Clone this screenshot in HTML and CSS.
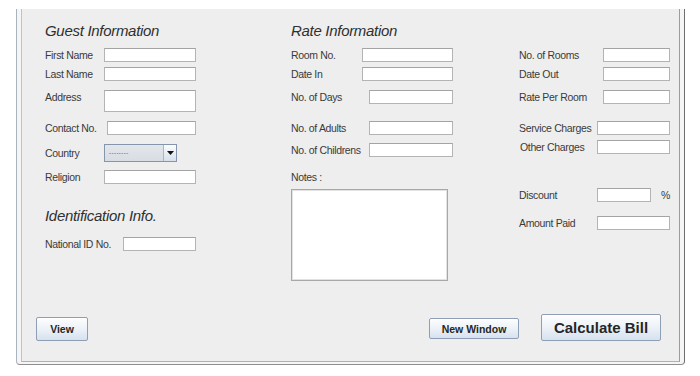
FILE: index.html
```html
<!DOCTYPE html>
<html>
<head>
<meta charset="utf-8">
<title>Guest Form</title>
<link rel="stylesheet" href="styles.css">
</head>
<body>
<div class="frame">
  <div class="panel">
    <div class="cols">
      <section class="col">
        <h2 class="title">Guest Information</h2>
        <div class="row mt7"><label class="lbl w59">First Name</label><input class="fld w91"></div>
        <div class="row mt5"><label class="lbl w59">Last Name</label><input class="fld w91"></div>
        <div class="row row-top mt9"><label class="lbl w59">Address</label><input class="fld w91 tall"></div>
        <div class="row mt9"><label class="lbl w62">Contact No.</label><input class="fld w88"></div>
        <div class="row mt9"><label class="lbl w59">Country</label>
          <div class="combo"><span class="combo-text">- - - - - - - -</span><span class="combo-btn"><svg width="7" height="4" viewBox="0 0 7 4"><path d="M0 0H7L3.5 4Z" fill="#111"/></svg></span></div>
        </div>
        <div class="row mt8"><label class="lbl w59">Religion</label><input class="fld w91"></div>
        <h2 class="title mt22">Identification Info.</h2>
        <div class="row mt11"><label class="lbl w78">National ID No.</label><input class="fld w72"></div>
      </section>

      <section class="col">
        <h2 class="title">Rate Information</h2>
        <div class="row mt7"><label class="lbl w71">Room No.</label><input class="fld w90"></div>
        <div class="row mt5"><label class="lbl w71">Date In</label><input class="fld w90"></div>
        <div class="row mt9"><label class="lbl w78">No. of Days</label><input class="fld w83"></div>
        <div class="row mt17"><label class="lbl w78">No. of Adults</label><input class="fld w83"></div>
        <div class="row mt8"><label class="lbl w78">No. of Childrens</label><input class="fld w83"></div>
        <div class="row mt13"><label class="lbl">Notes :</label></div>
        <textarea class="notes"></textarea>
      </section>

      <section class="col">
        <div class="row mt27"><label class="lbl w84">No. of Rooms</label><input class="fld w66"></div>
        <div class="row mt5"><label class="lbl w84">Date Out</label><input class="fld w66"></div>
        <div class="row mt9"><label class="lbl w84">Rate Per Room</label><input class="fld w66"></div>
        <div class="row mt17"><label class="lbl w78">Service Charges</label><input class="fld w72"></div>
        <div class="row mt5"><label class="lbl w78 ind1">Other Charges</label><input class="fld w72"></div>
        <div class="row mt34"><label class="lbl w78">Discount</label><input class="fld w53"><span class="pct">%</span></div>
        <div class="row mt14"><label class="lbl w78">Amount Paid</label><input class="fld w72"></div>
      </section>
    </div>

    <div class="actions">
      <button class="btn btn-view">View</button>
      <div class="actions-right">
        <button class="btn btn-new">New Window</button>
        <button class="btn btn-calc">Calculate Bill</button>
      </div>
    </div>
  </div>
</div>
</body>
</html>
```

FILE: styles.css
```css
* { box-sizing: border-box; }

html, body {
  margin: 0;
  padding: 0;
  background: #ffffff;
  font-family: "Liberation Sans", Arial, sans-serif;
}

.frame {
  margin: 9px 0 0 16px;
  width: 669px;
  height: 356px;
  background: #f5f5f5;
  border: 1px solid #8f8f8f;
  border-top: none;
  border-left-color: #a9b3bd;
  border-right-color: #6e6e6e;
  border-radius: 0 0 4px 4px;
  display: flex;
}

.panel {
  margin: 0 4px 2px 4px;
  flex: 1;
  background: #eeeeee;
  border: 1px solid #c2c2c2;
  border-top: none;
  border-right-color: #9c9c9c;
  border-bottom-color: #b0b0b0;
  display: flex;
  flex-direction: column;
}

.cols {
  display: grid;
  grid-template-columns: 246px 228px 1fr;
  padding: 12px 0 0 23px;
}

.col {
  display: flex;
  flex-direction: column;
  align-items: flex-start;
}

.title {
  margin: 0;
  height: 20px;
  line-height: 20px;
  font-size: 15px;
  font-weight: normal;
  font-style: italic;
  letter-spacing: -0.3px;
  color: #303030;
}

.row {
  display: flex;
  align-items: center;
}
.row-top { align-items: flex-start; }

.lbl {
  display: block;
  flex: none;
  height: 14px;
  line-height: 14px;
  font-size: 10.5px;
  letter-spacing: -0.35px;
  color: #3a3a3a;
  white-space: nowrap;
}
.ind1 { padding-left: 1px; }

.w59 { width: 59px; }
.w62 { width: 62px; }
.w71 { width: 71px; }
.w78 { width: 78px; }
.w84 { width: 84px; }

.fld {
  display: block;
  margin: 0;
  padding: 0;
  height: 14px;
  background: #ffffff;
  border: 1px solid #b4b4b4;
  border-top-color: #a4a4a4;
  border-radius: 0;
  font: inherit;
}
.fld.tall { height: 22px; }
.fld.w53 { width: 54px; }
.fld.w66 { width: 67px; }
.fld.w72 { width: 73px; }
.fld.w83 { width: 84px; }
.fld.w88 { width: 89px; }
.fld.w90 { width: 91px; }
.fld.w91 { width: 92px; }

.pct {
  margin-left: 10px;
  font-size: 10.5px;
  color: #3a3a3a;
}

.combo {
  display: flex;
  width: 73px;
  height: 18px;
  border: 1px solid #8595ab;
  background: linear-gradient(#e3e6eb, #d8dde4);
}
.combo-text {
  flex: 1;
  padding-left: 4px;
  font-size: 6px;
  line-height: 16px;
  color: #333;
  letter-spacing: -0.6px;
  white-space: nowrap;
  overflow: hidden;
}
.combo-btn {
  width: 13px;
  display: flex;
  align-items: center;
  justify-content: center;
  border-left: 1px solid #a9b6c6;
  background: linear-gradient(#fbfcfd, #d6e0ec);
}

.notes {
  display: block;
  margin: 5px 0 0 0;
  padding: 0;
  width: 157px;
  height: 92px;
  resize: none;
  background: #ffffff;
  border: 1px solid #a8a8a8;
  box-shadow: inset 0 0 0 1px #e2e2e2;
}

.mt5 { margin-top: 5px; }
.mt7 { margin-top: 7px; }
.mt8 { margin-top: 8px; }
.mt9 { margin-top: 9px; }
.mt11 { margin-top: 11px; }
.mt13 { margin-top: 13px; }
.mt14 { margin-top: 14px; }
.mt17 { margin-top: 17px; }
.mt22 { margin-top: 22px; }
.mt27 { margin-top: 27px; }
.mt34 { margin-top: 34px; }

.actions {
  margin-top: auto;
  display: flex;
  align-items: center;
  justify-content: space-between;
  padding: 0 18px 18px 14px;
}
.actions-right {
  display: flex;
  align-items: center;
  gap: 22px;
}

.btn {
  margin: 0;
  padding: 0;
  font-family: "Liberation Sans", Arial, sans-serif;
  font-weight: bold;
  color: #262626;
  background: linear-gradient(#fdfdfe 0%, #eef3f8 45%, #d6e2ef 100%);
  border: 1px solid #8e9fb5;
  border-radius: 2px;
  box-shadow: inset 0 1px 0 #ffffff;
}
.btn-view { width: 52px; height: 24px; font-size: 10.5px; }
.btn-new { width: 90px; height: 21px; font-size: 10.5px; }
.btn-calc { width: 120px; height: 27px; font-size: 15px; margin-bottom: 2px; }
```
